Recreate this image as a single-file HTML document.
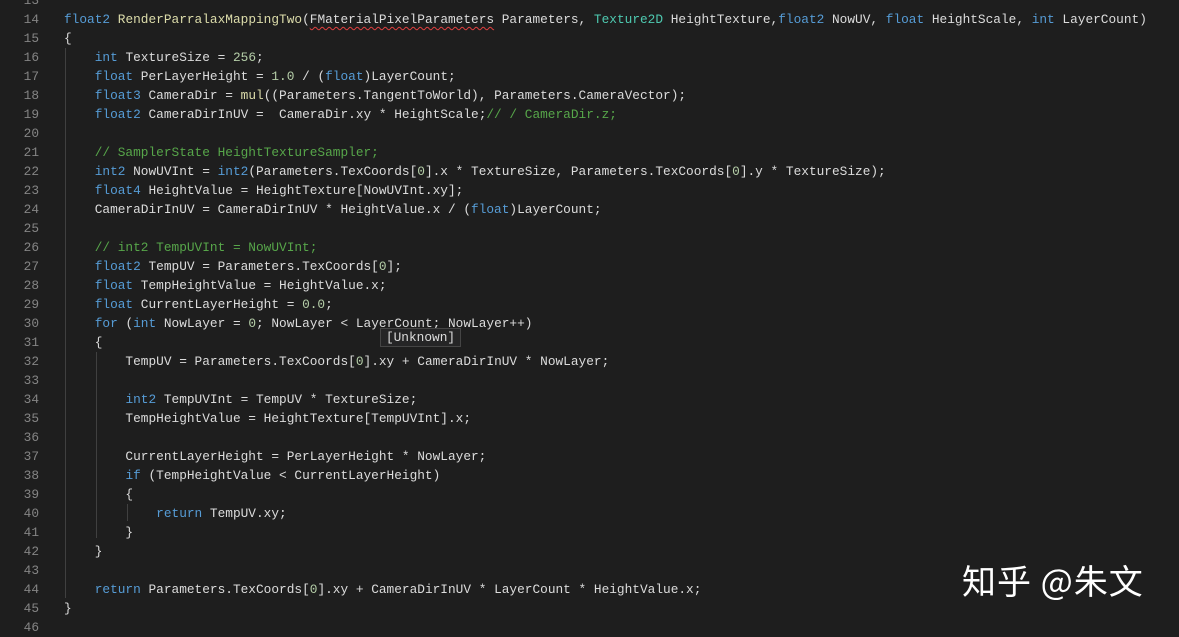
<!DOCTYPE html>
<html><head><meta charset="utf-8"><style>
html,body{margin:0;padding:0;background:#1e1e1e;width:1179px;height:629px;overflow:hidden}
.wrap{position:absolute;left:0;top:-9px}
.ln{position:absolute;left:0;width:39px;text-align:right;color:#858585;font:12.8px/19px "Liberation Mono",monospace;white-space:pre;margin:0}
.code{position:absolute;left:64px;top:0;color:#dcdcdc;font:12.8px/19px "Liberation Mono",monospace;white-space:pre;margin:0}
.k{color:#569cd6}.f{color:#dcdcaa}.t{color:#4ec9b0}.n{color:#b5cea8}.c{color:#57a64a}
.sq{text-decoration:underline wavy #e04040;text-decoration-thickness:1px;text-underline-offset:3px}
.g{position:absolute;width:1px;background:#404040}
.tip{position:absolute;left:380px;top:328px;width:81px;height:19px;background:#252526;border:1px solid #454545;color:#dcdcdc;font:12.8px/17px "Liberation Mono",monospace;text-align:center;box-sizing:border-box}
.zh{position:absolute;left:962px;top:558px;color:#fff;font:34px/44px "Noto Sans CJK SC","WenQuanYi Zen Hei",sans-serif;letter-spacing:1px}
</style></head><body>
<div class="g" style="left:65px;top:48px;height:550px"></div>
<div class="g" style="left:96px;top:352px;height:186px"></div>
<div class="g" style="left:127px;top:504px;height:17px"></div>
<div class="wrap">
<pre class="ln">13
14
15
16
17
18
19
20
21
22
23
24
25
26
27
28
29
30
31
32
33
34
35
36
37
38
39
40
41
42
43
44
45
46</pre>
<pre class="code">&#8203;
<span class="k">float2</span> <span class="f">RenderParralaxMappingTwo</span>(<span class="sq">FMaterialPixelParameters</span> Parameters, <span class="t">Texture2D</span> HeightTexture,<span class="k">float2</span> NowUV, <span class="k">float</span> HeightScale, <span class="k">int</span> LayerCount)
{
    <span class="k">int</span> TextureSize = <span class="n">256</span>;
    <span class="k">float</span> PerLayerHeight = <span class="n">1.0</span> / (<span class="k">float</span>)LayerCount;
    <span class="k">float3</span> CameraDir = <span class="f">mul</span>((Parameters.TangentToWorld), Parameters.CameraVector);
    <span class="k">float2</span> CameraDirInUV =  CameraDir.xy * HeightScale;<span class="c">// / CameraDir.z;</span>

    <span class="c">// SamplerState HeightTextureSampler;</span>
    <span class="k">int2</span> NowUVInt = <span class="k">int2</span>(Parameters.TexCoords[<span class="n">0</span>].x * TextureSize, Parameters.TexCoords[<span class="n">0</span>].y * TextureSize);
    <span class="k">float4</span> HeightValue = HeightTexture[NowUVInt.xy];
    CameraDirInUV = CameraDirInUV * HeightValue.x / (<span class="k">float</span>)LayerCount;

    <span class="c">// int2 TempUVInt = NowUVInt;</span>
    <span class="k">float2</span> TempUV = Parameters.TexCoords[<span class="n">0</span>];
    <span class="k">float</span> TempHeightValue = HeightValue.x;
    <span class="k">float</span> CurrentLayerHeight = <span class="n">0.0</span>;
    <span class="k">for</span> (<span class="k">int</span> NowLayer = <span class="n">0</span>; NowLayer &lt; LayerCount; NowLayer++)
    {
        TempUV = Parameters.TexCoords[<span class="n">0</span>].xy + CameraDirInUV * NowLayer;

        <span class="k">int2</span> TempUVInt = TempUV * TextureSize;
        TempHeightValue = HeightTexture[TempUVInt].x;

        CurrentLayerHeight = PerLayerHeight * NowLayer;
        <span class="k">if</span> (TempHeightValue &lt; CurrentLayerHeight)
        {
            <span class="k">return</span> TempUV.xy;
        }
    }

    <span class="k">return</span> Parameters.TexCoords[<span class="n">0</span>].xy + CameraDirInUV * LayerCount * HeightValue.x;
}
</pre>
</div>
<div class="tip">[Unknown]</div>
<div class="zh">知乎 @朱文</div>
</body></html>
